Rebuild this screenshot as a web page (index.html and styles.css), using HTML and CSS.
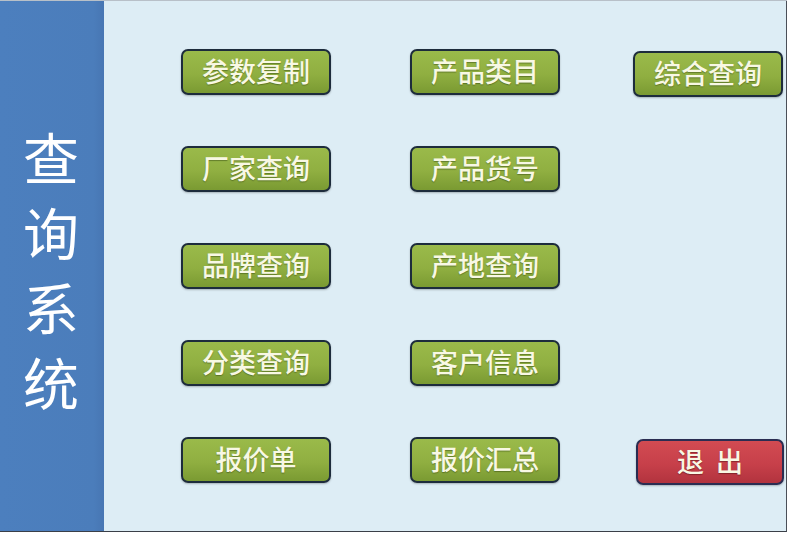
FILE: index.html
```html
<!DOCTYPE html>
<html lang="zh">
<head>
<meta charset="utf-8">
<link rel="stylesheet" href="styles.css">
</head>
<body>
<div class="frame">
  <aside class="side">
    <div class="title">查<br>询<br>系<br>统</div>
  </aside>
  <main class="main">
    <div class="grid">
      <button class="btn">参数复制</button>
      <button class="btn">产品类目</button>
      <button class="btn c3">综合查询</button>
      <button class="btn">厂家查询</button>
      <button class="btn">产品货号</button>
      <span></span>
      <button class="btn">品牌查询</button>
      <button class="btn">产地查询</button>
      <span></span>
      <button class="btn">分类查询</button>
      <button class="btn">客户信息</button>
      <span></span>
      <button class="btn">报价单</button>
      <button class="btn">报价汇总</button>
      <button class="btn c3 exit">退 出</button>
    </div>
  </main>
</div>
</body>
</html>
```
FILE: styles.css
```css
html, body {
  margin: 0;
  padding: 0;
  background: #ffffff;
}
body {
  width: 800px;
  height: 535px;
  overflow: hidden;
  font-family: "Noto Sans CJK SC", "Noto Sans", sans-serif;
}
.frame {
  display: flex;
  width: 787px;
  height: 532px;
  border-top: 1px solid #b8c0c8;
  box-sizing: border-box;
}
.side {
  width: 104px;
  height: 100%;
  background: linear-gradient(to right, #4c7fbe 0%, #4b7dbb 90%, #4776b3 100%);
  display: flex;
  align-items: center;
  justify-content: center;
  border-bottom: 1px solid #3a3f48;
  box-sizing: border-box;
}
.title {
  color: #ffffff;
  font-size: 56px;
  line-height: 75px;
  text-align: center;
  padding-top: 4px;
  margin-left: -2px;
}
.main {
  flex: 1;
  height: 100%;
  background: #ddedf5;
  border-right: 1px solid #4a4f58;
  border-bottom: 1px solid #3a3f48;
  box-sizing: border-box;
  padding: 48px 0 0 77px;
}
.grid {
  display: grid;
  grid-template-columns: 229px 223px 150px;
  grid-auto-rows: 46px;
  row-gap: 51px;
}
.btn {
  width: 150px;
  height: 46px;
  margin: 0;
  padding: 0 0 2px;
  border: 2px solid #1d2c3c;
  border-radius: 7px;
  background: linear-gradient(to bottom, #9aba4a 0%, #90af41 55%, #7a9a32 100%);
  color: #f8f8e4;
  font-family: "Noto Sans CJK SC", "Noto Sans", sans-serif;
  font-size: 27px;
  font-weight: 500;
  line-height: 40px;
  text-shadow: 0 1px 1px rgba(40, 60, 10, 0.45);
  box-shadow: 0 1px 2px rgba(0, 0, 0, 0.25);
  box-sizing: border-box;
  text-align: center;
}
.c3 {
  margin-top: 2px;
}
.exit {
  width: 148px;
  margin-left: 3px;
  word-spacing: 6px;
  border-color: #2a2d52;
  background: linear-gradient(to bottom, #d24b52 0%, #c7404a 55%, #b2333e 100%);
  text-shadow: 0 1px 1px rgba(60, 10, 10, 0.45);
}
```
